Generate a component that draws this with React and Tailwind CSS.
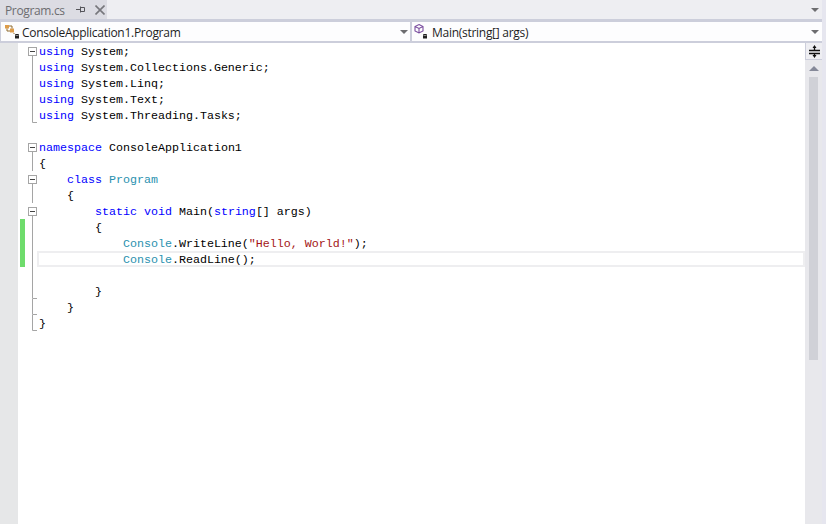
import React from "react";

const KW = "text-[#0000ff]";
const TYPE = "text-[#2b91af]";
const STR = "text-[#a31515]";

// outline: box = collapse toggle, line = straight guide, end = guide with a foot
const LINES = [
  { o: "box", t: [[KW, "using"], ["", " System;"]] },
  { o: "line", t: [[KW, "using"], ["", " System.Collections.Generic;"]] },
  { o: "line", t: [[KW, "using"], ["", " System.Linq;"]] },
  { o: "line", t: [[KW, "using"], ["", " System.Text;"]] },
  { o: "end", t: [[KW, "using"], ["", " System.Threading.Tasks;"]] },
  { o: "", t: [] },
  { o: "box", t: [[KW, "namespace"], ["", " ConsoleApplication1"]] },
  { o: "line", t: [["", "{"]] },
  { o: "box", t: [[KW, "    class"], ["", " "], [TYPE, "Program"]] },
  { o: "line", t: [["", "    {"]] },
  { o: "box", t: [[KW, "        static void"], ["", " Main("], [KW, "string"], ["", "[] args)"]] },
  { o: "line", changed: true, t: [["", "        {"]] },
  { o: "line", changed: true, t: [[TYPE, "            Console"], ["", ".WriteLine("], [STR, "\"Hello, World!\""], ["", ");"]] },
  { o: "line", changed: true, current: true, t: [[TYPE, "            Console"], ["", ".ReadLine();"]] },
  { o: "line", t: [] },
  { o: "end", t: [["", "        }"]] },
  { o: "end", t: [["", "    }"]] },
  { o: "end", t: [["", "}"]] },
];

function Outline({ kind }) {
  if (!kind) return <div className="w-[11px] h-4 shrink-0" />;
  return (
    <svg width="11" height="16" className="shrink-0 block">
      {kind === "box" && (
        <>
          <path d="M5.500 13V16" stroke="#a5a5a5" />
          <rect x="1.500" y="4.500" width="8" height="8" fill="#fff" stroke="#a5a5a5" />
          <path d="M3 8.500H8" stroke="#444" />
        </>
      )}
      {kind === "line" && <path d="M5.500 0V16" stroke="#a5a5a5" />}
      {kind === "end" && <path d="M5.500 0V15.500H10" fill="none" stroke="#a5a5a5" />}
    </svg>
  );
}

function CodeLine({ line }) {
  return (
    <div className="flex h-4">
      <div className={`w-[5px] ml-[2px] mr-[2px] shrink-0 ${line.changed ? "bg-[#6fdc6c]" : ""}`} />
      <Outline kind={line.o} />
      <div className={`flex-1 h-4 -ml-[1px] pl-[2px] pt-[1px] leading-[17px] whitespace-pre ${line.current ? "shadow-[inset_0_0_0_2px_#eeeef0]" : ""}`}>
        {line.t.map(([cls, text], i) => (
          <span key={i} className={cls}>{text}</span>
        ))}
      </div>
    </div>
  );
}

function Lock({ x }) {
  return (
    <>
      <rect x={x} y="13.500" width="4" height="3" fill="#222" />
      <path d={`M${x + 0.5} 13.500v-1h3v1`} fill="none" stroke="#222" />
    </>
  );
}

function ClassIcon() {
  return (
    <svg width="21" height="19" viewBox="0 0 21 19" className="shrink-0">
      <path d="M4 3h4v3.500H4zM9 6.500h4v4H9z" fill="#dd9c4a" />
      <path d="M6 6.500v2.500h3M8 4h3v2.500M13 11v1" fill="none" stroke="#8f6a2c" />
      <Lock x={14} />
    </svg>
  );
}

function MethodIcon() {
  return (
    <svg width="20" height="19" viewBox="0 0 20 19" className="shrink-0">
      <path d="M7 2.500l4 2v4.500l-4 2-4-2v-4.500zM3 4.500l4 2 4-2M7 6.500v4.500" fill="none" stroke="#7a4d9f" strokeWidth="1.100" />
      <Lock x={11} />
    </svg>
  );
}

function Caret() {
  return <div className="w-0 h-0 border-x-[4px] border-x-transparent border-t-[4px] border-t-[#6d6d70]" />;
}

export default function App() {
  return (
    <div className="w-[826px] h-[524px] overflow-hidden flex bg-[#eeeef2] font-['Open_Sans',sans-serif]">
      <div className="w-[822px] shrink-0 flex flex-col">
        {/* tab strip */}
        <div className="h-[19px] flex items-stretch shrink-0">
          <div className="w-[107px] bg-[#dcdce3] flex items-center pl-[5px] text-[#6d6d70]">
            <span className="text-[12px] tracking-[-0.35px] pt-[2px]">Program.cs</span>
            <svg width="9" height="9" viewBox="0 0 9 9" className="ml-[11px]">
              <path d="M0 4.500H4M4.500 1.500V7.500M4.500 2.500H8.500V6.500H4.500" fill="none" stroke="#55555a" />
            </svg>
            <svg width="10" height="10" viewBox="0 0 10 10" className="ml-[10px]">
              <path d="M0.500 0.500L9.500 9.500M9.500 0.500L0.500 9.500" stroke="#77777c" strokeWidth="1.600" />
            </svg>
          </div>
          <div className="flex-1 flex items-center justify-end pr-[3px]">
            <Caret />
          </div>
        </div>

        {/* navigation bar */}
        <div className="h-[24px] shrink-0 flex gap-[2px] border-t-[3px] border-b-2 border-[#cccedb] bg-[#cccedb] text-[12px] text-[#1e1e1e]">
          <div className="w-[409px] ml-[1px] bg-[#fdfdfe] flex items-center pr-[1px]">
            <ClassIcon />
            <span className="tracking-[-0.28px] pt-[2px]">ConsoleApplication1.Program</span>
            <div className="ml-auto mr-[1px]"><Caret /></div>
          </div>
          <div className="flex-1 bg-[#fdfdfe] flex items-center pr-[2px]">
            <MethodIcon />
            <span className="tracking-[-0.28px] pt-[2px]">Main(string[] args)</span>
            <div className="ml-auto mr-[1px]"><Caret /></div>
          </div>
        </div>

        {/* editor */}
        <div className="flex-1 flex min-h-0">
          <div className="w-[18px] bg-[#e6e7e8] shrink-0" />
          <div className="flex-1 bg-white text-[11.67px] text-black font-['Liberation_Mono',monospace]">
            {LINES.map((line, i) => (
              <CodeLine key={i} line={line} />
            ))}
          </div>

          {/* vertical scrollbar */}
          <div className="w-[17px] bg-[#e8e8ec] shrink-0 flex flex-col items-center">
            <div className="w-full h-[17px] border-b border-l border-[#cccedb] flex items-center justify-center bg-[#eeeef2]">
              <svg width="11" height="13" viewBox="0 0 11 13">
                <path d="M0 5.500H11M0 8.500H11" stroke="#111" strokeWidth="1.300" />
                <path d="M5.500 0L7.500 3H3.500zM5.500 13L3.500 10H7.500z" fill="#111" />
                <path d="M5.500 2V5M5.500 9V11" stroke="#111" strokeWidth="1.300" />
              </svg>
            </div>
            <div className="mt-[6px] w-0 h-0 border-x-[5px] border-x-transparent border-b-[5px] border-b-[#868999]" />
            <div className="mt-[6px] w-[9px] h-[283px] bg-[#d0d1d7]" />
          </div>
        </div>
      </div>
      <div className="flex-1 bg-[#e6e6ef]" />
    </div>
  );
}
